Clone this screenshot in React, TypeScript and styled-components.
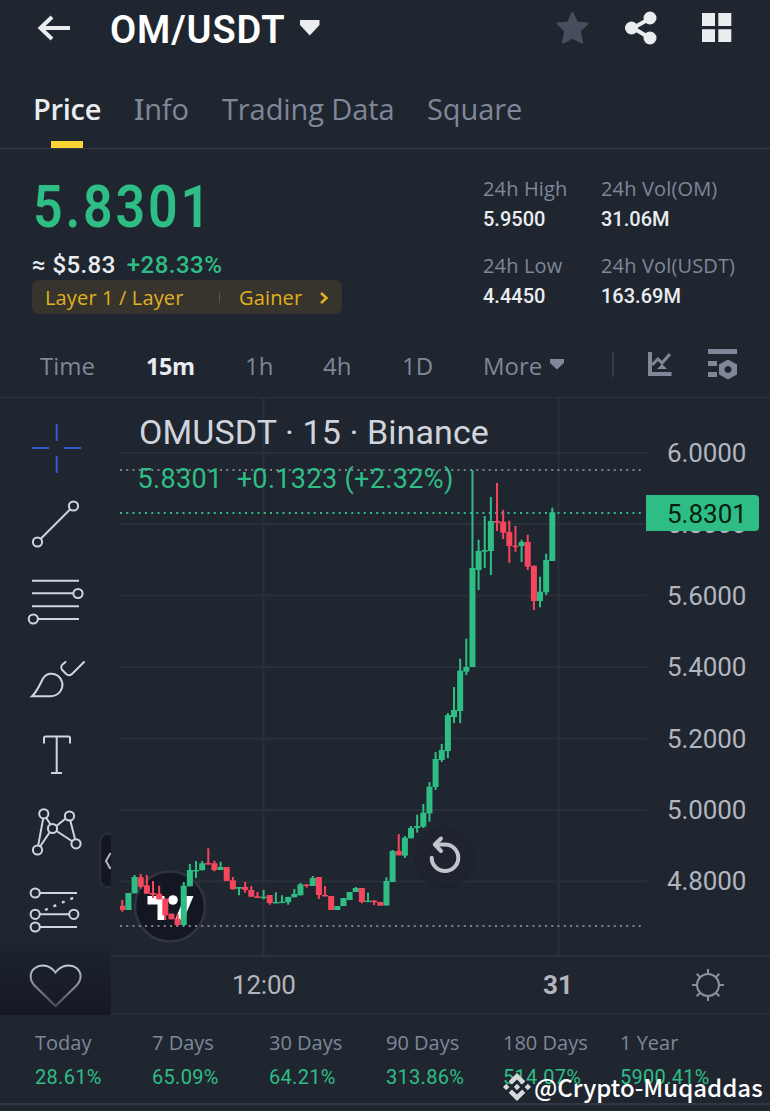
import React from 'react';
import styled, { createGlobalStyle } from 'styled-components';

const c = {
  bg: '#1f2630',
  line: '#2c343f',
  text: '#eaecef',
  muted: '#7f8799',
  green: '#2ebd85',
  red: '#f6465d',
  icon: '#d1d4dc',
  axis: '#b2b5be',
};
const label = "'Open Sans', 'Noto Sans', sans-serif";
const numeric = "Roboto, 'Liberation Sans', sans-serif";

const GlobalStyle = createGlobalStyle`
  * { box-sizing: border-box; }
  body { margin: 0; background: ${c.bg}; }
  svg { display: block; }
`;

const Screen = styled.main`
  width: 770px;
  height: 1111px;
  display: flex;
  flex-direction: column;
  overflow: hidden;
  position: relative;
  background: ${c.bg};
  color: ${c.text};
  font-family: ${label};
  white-space: nowrap;
`;

const Text = styled.span<{
  $size: number;
  $ls?: number;
  $color?: string;
  $weight?: number;
  $numeric?: boolean;
  $lh?: number;
}>`
  font-family: ${(p) => (p.$numeric ? numeric : label)};
  font-size: ${(p) => p.$size}px;
  letter-spacing: ${(p) => p.$ls ?? 0}px;
  color: ${(p) => p.$color ?? c.text};
  font-weight: ${(p) => p.$weight ?? 400};
  line-height: ${(p) => (p.$lh ? `${p.$lh}px` : 1.2)};
`;

const Header = styled.header`
  height: 60px;
  flex: none;
  display: grid;
  grid-template-columns: 73px 190px 256px 69px 77px 32px;
  padding: 0 0 4px 37px;
  align-items: center;
`;

const Title = styled.h1`
  margin: 0;
  padding-top: 3px;
  font: 600 38px/46px ${numeric};
  letter-spacing: 0.9px;
  color: #fff;
`;

const Tabs = styled.nav`
  height: 89px;
  flex: none;
  display: grid;
  grid-template-columns: 101px 88px 205px 110px;
  padding-left: 33px;
  border-bottom: 1px solid #353d48;
`;

const Tab = styled.div<{ $active?: boolean }>`
  padding-top: 29px;
  background: ${(p) =>
    p.$active ? 'linear-gradient(#fcd535, #fcd535) 17.5px 81px / 32px 7px no-repeat' : 'none'};
`;

const Serifed = styled.span`
  font-family: 'Noto Sans', sans-serif;
`;

const Summary = styled.section`
  height: 186px;
  flex: none;
  display: grid;
  grid-template-columns: 451px 118px 150px;
  padding-left: 32px;
`;

const PriceBlock = styled.div`
  display: flex;
  flex-direction: column;
  padding-top: 24px;
`;

const PriceLine = styled.div`
  height: 69px;
  padding-left: 1px;
`;

const LastPrice = styled.div`
  display: inline-block;
  font: 600 59px/68px ${numeric};
  letter-spacing: 3.2px;
  color: ${c.green};
  transform: scaleX(0.88);
  transform-origin: left;
`;

const ChangeLine = styled.div`
  height: 38px;
  display: flex;
  align-items: center;
  gap: 11px;
  padding-top: 8px;
`;

const Tags = styled.div`
  width: 310px;
  height: 34px;
  display: grid;
  grid-template-columns: 174px 20px 80px 12px;
  align-items: center;
  padding: 2px 0 0 13px;
  border-radius: 7px;
  background: #36342c;
`;

const TagDivider = styled.i`
  width: 1px;
  height: 10px;
  background: #6b5a25;
`;

const StatColumn = styled.div`
  display: flex;
  flex-direction: column;
  gap: 17px;
  padding-top: 25px;
`;

const Stat = styled.div`
  display: flex;
  flex-direction: column;
`;

const Intervals = styled.nav`
  height: 63px;
  flex: none;
  display: grid;
  grid-template-columns: 106px 99px 78px 79px 81px 67px 62px 36px 60px 32px;
  padding-left: 40px;
  align-items: center;
  border-bottom: 1px solid ${c.line};

  svg { margin-top: -4px; }
`;

const VRule = styled.i`
  width: 2px;
  height: 25px;
  background: #353c49;
  margin-top: -4px;
`;

const ChartArea = styled.section`
  height: 617px;
  flex: none;
  display: grid;
  grid-template-columns: 111px 536px 123px;
  grid-template-rows: 557px 60px;
  border-bottom: 2px solid #272e39;
`;

const Tools = styled.aside`
  grid-row: 1 / 3;
  background: linear-gradient(transparent 535px, #141823 620px);
  position: relative;
`;

const CollapseHandle = styled.button`
  position: absolute;
  right: 0;
  top: 435px;
  width: 12px;
  height: 55px;
  padding: 0;
  border: 2px solid #292e39;
  border-right: 0;
  border-radius: 9px 0 0 9px;
  background: #131722;
`;

const Plot = styled.div`
  position: relative;
`;

const Legend = styled.div`
  position: absolute;
  left: 28px;
  top: 12px;
  display: flex;
  flex-direction: column;
`;

const LegendValues = styled.div`
  margin-left: -1.5px;
  padding-top: 1px;
`;

const PriceAxis = styled.div`
  position: relative;
  display: flex;
  flex-direction: column;
  padding: 37px 0 0 20px;
`;

const AxisLabel = styled.span`
  font: 400 26px/36px ${numeric};
  letter-spacing: -0.1px;
  height: 71.4px;
  flex: none;
  color: ${c.axis};
`;

const PriceTag = styled.div`
  position: absolute;
  left: -1px;
  top: 97px;
  width: 113px;
  height: 36px;
  padding-left: 21px;
  border-radius: 0 4px 4px 0;
  background: #2ebd85;
  color: #08200f;
  font: 400 26px/38px ${numeric};
`;

const TimeAxis = styled.div`
  grid-column: 2 / 4;
  display: grid;
  grid-template-columns: 311px 148px 32px;
  padding: 0 0 1px 121px;
  align-items: center;
  border-top: 2px solid #2a313c;

  svg { margin-top: -1px; }
`;

const Performance = styled.footer`
  height: 90px;
  flex: none;
  display: grid;
  grid-template-columns: repeat(5, 117px) 1fr;
  padding: 14px 0 0 35px;
  border-bottom: 2px solid #303843;
`;

const Period = styled.div`
  display: flex;
  flex-direction: column;
`;

const Watermark = styled.div`
  position: absolute;
  left: 503px;
  top: 1070px;
  display: flex;
  align-items: center;
  gap: 3px;
  font: 500 24px/34px 'Noto Sans CJK SC', 'Noto Sans', sans-serif;
  color: #fff;
`;

// Each candle: direction, high, body top, body bottom, low (plot pixels from the screen top).
type Candle = ['u' | 'd', number, number, number, number];
const candles: Candle[] = [
  ['d', 900, 905.7, 910, 911.7], ['u', 893, 893, 910, 910], ['u', 875, 877, 893.3, 893.3],
  ['d', 874, 877.3, 886.7, 888.7], ['d', 875, 885.3, 893.7, 893.7], ['d', 881, 893, 894.7, 898],
  ['d', 885.7, 893.7, 899.3, 899.3], ['d', 898.7, 898.7, 915.3, 920], ['d', 913.7, 913.7, 919.3, 919.3],
  ['d', 914, 918.7, 925, 926], ['u', 882, 885.7, 925, 926], ['u', 864, 870, 886.3, 886.3],
  ['u', 861, 870, 871.3, 878], ['u', 861, 863.3, 870.3, 870.3], ['d', 848.3, 863, 864.5, 864.5],
  ['d', 860.7, 863.3, 870, 871.3], ['u', 861.7, 867, 870, 870], ['d', 867, 867, 881, 881],
  ['d', 877, 880.3, 889.3, 889.3], ['u', 887, 887, 888.7, 895.3], ['d', 882, 887, 890, 892.7],
  ['d', 886, 890, 896.7, 896.7], ['d', 892, 896.3, 898, 898], ['u', 890, 896.7, 898, 899.3],
  ['d', 895, 895, 903, 904.7], ['u', 892.3, 902, 903.3, 903.3], ['u', 895.3, 901.7, 903, 903],
  ['u', 896.7, 897, 902.3, 904.7], ['u', 889, 894, 897.3, 897.3], ['u', 883, 884.3, 895.3, 895.3],
  ['d', 884, 884.5, 886, 887.7], ['u', 876, 878, 886, 886], ['d', 877, 877, 895, 899],
  ['d', 886, 895, 896.3, 896.3], ['d', 896, 896, 910, 910], ['u', 906, 906, 910, 910],
  ['u', 898, 898, 906, 906], ['u', 892, 892, 900, 900], ['u', 887, 888, 892, 892],
  ['d', 888, 888, 902, 903.3], ['u', 892.7, 900.7, 902, 902], ['d', 900, 900.7, 902.3, 905],
  ['d', 902, 902, 905.7, 905.7], ['u', 877.3, 881, 905.5, 905.5], ['u', 850, 851, 882, 882],
  ['d', 834, 851, 855.3, 855.3], ['u', 836, 837.7, 855.7, 858], ['u', 826, 828, 838.3, 838.3],
  ['u', 814.7, 826, 828, 832.7], ['u', 804, 812.7, 826.7, 828], ['u', 782, 786.7, 813.3, 821.7],
  ['u', 752, 759, 787, 790], ['u', 744, 750, 760, 762], ['u', 713, 715, 751, 758],
  ['u', 687, 710, 717, 723], ['u', 658.7, 670.7, 711, 723], ['u', 638.7, 667, 671.7, 675],
  ['u', 470, 568, 667, 667], ['u', 539.7, 551, 570, 590], ['u', 516, 550, 551.7, 568],
  ['u', 497, 521, 551, 575], ['d', 483, 521, 522.7, 531], ['d', 510, 521.7, 532.7, 539],
  ['d', 520.7, 532, 546, 562.7], ['d', 526, 545.7, 546.9, 551.7], ['u', 539.7, 542, 546, 562],
  ['d', 534.7, 542, 566.7, 570], ['d', 565.7, 565.7, 601, 610], ['u', 576.7, 591.7, 601, 607.3],
  ['u', 553.7, 560, 592.3, 595], ['u', 507.7, 512.3, 561, 561],
];

const gridRows = [453, 524, 595.5, 667, 738.5, 810, 881.5];
const gridColumns = [263.5, 558.5];

function Chart() {
  return (
    <svg width="536" height="557" viewBox="111 398 536 557">
      <g stroke="#2a303a" strokeWidth="2">
        {gridRows.map((y) => <line key={y} x1="120" x2="647" y1={y} y2={y} />)}
        {gridColumns.map((x) => <line key={x} x1={x} x2={x} y1="398" y2="955" />)}
      </g>
      <g>
        <circle cx="170" cy="906.5" r="35" fill="#131722" stroke="#30343e" strokeWidth="2.5" />
        <path d="M147.5 896h17v24h-7v-15.5h-10z" fill="#fff" />
        <circle cx="173" cy="900" r="4.8" fill="#fff" />
        <path d="M185 896h8.5l-10 24h-8.5z" fill="#fff" />
      </g>
      <g strokeWidth="2" strokeDasharray="2 4.25">
        <line x1="120" x2="643" y1="470" y2="470" stroke="#7d818b" />
        <line x1="120" x2="643" y1="513" y2="513" stroke={c.green} />
        <line x1="120" x2="643" y1="926" y2="926" stroke="#7d818b" />
      </g>
      {candles.map(([dir, high, top, bottom, low], i) => {
        const x = 122.3 + i * 6.143;
        const left = Math.max(x - 3, 120);
        return (
          <g key={i} fill={dir === 'u' ? c.green : c.red}>
            <rect x={x - 1} y={high} width="2" height={low - high} />
            <rect x={left} y={top} width={x + 3 - left} height={Math.max(bottom - top, 1.4)} />
          </g>
        );
      })}
      <circle cx="444.5" cy="859" r="30" fill="#1a1f29" opacity=".55" />
      <circle cx="444.5" cy="856" r="29.5" fill="#1f232e" />
      <g fill="none" stroke="#c1c4cd" strokeWidth="4" strokeLinecap="round" strokeLinejoin="round">
        <path d="M431.7 857.8A13.3 13.3 0 1 0 445 844.5H436" />
        <path d="M441 838.5l-6.2 6 6.2 6.5" />
      </g>
    </svg>
  );
}

function DrawingTools() {
  return (
    <svg width="111" height="615" viewBox="0 398 111 615" fill="none" stroke={c.icon} strokeWidth="2">
      <defs>
        <linearGradient id="heartFade" x1="0" y1="0" x2="0" y2="1">
          <stop offset="0" stopColor="#c8cbd3" />
          <stop offset="1" stopColor="#4a4e59" />
        </linearGradient>
      </defs>
      <path d="M56.7 424v17M56.7 456v17M32 448h17M64 448h17" stroke="#2f5bd0" />
      <path d="M40.5 539l30-30" />
      <circle cx="37.5" cy="542" r="4.6" />
      <circle cx="73.5" cy="506" r="4.6" />
      <path d="M32 580.7h47M32 593.3h41.5M32 606.3h47M38 619h41" />
      <circle cx="78" cy="593.5" r="4.6" />
      <circle cx="33.3" cy="619" r="4.6" />
      <path d="M32 696.3C37.500 691 40 684 43 678.500C46.500 673 53 672.500 57.500 675.500C63 679.500 63.800 686 60.500 691C58 694.500 54.500 696.300 50.500 696.300z" />
      <path d="M65.500 662L62.500 664.500C60.800 666 61 668.500 62.300 670L66 673.800C68 676 70.500 675.500 72.500 673.500L84 662" strokeLinecap="round" />
      <path d="M44 743.500v-5.500q0-1.500 1.500-1.500h23q1.500 0 1.500 1.500v5.500M56.700 737v36M51 773h11" />
      <path d="M43.200 818.400l-5 27M46 817.500l4.400 6.800M56.400 826l9-7.200M70.200 820.300l4.800 18.700M56.500 831l15.300 10M49.500 832.500l-9.200 13.800" />
      <circle cx="43.800" cy="813.800" r="4.600" />
      <circle cx="69.500" cy="816" r="4.600" />
      <circle cx="52.500" cy="828.500" r="4.600" />
      <circle cx="37.500" cy="850" r="4.600" />
      <circle cx="76" cy="843.800" r="4.600" />
      <path d="M40 893h37M40 914.300h29M40 927h37" />
      <path d="M45 910l30-13" strokeWidth="2.400" strokeDasharray="3 6.200" />
      <circle cx="35.200" cy="893" r="4.600" />
      <circle cx="35.200" cy="914.300" r="4.600" />
      <circle cx="73.800" cy="914.300" r="4.600" />
      <circle cx="35.200" cy="927" r="4.600" />
      <path
        d="M55.500 1006L35 986C29 980 29.500 972 35 968C41 963.500 50 965 55.500 972.500C61 965 70.500 963.500 76.500 968C82 972.500 82 980 76 986z"
        stroke="url(#heartFade)"
      />
    </svg>
  );
}

const periods = [
  { name: 'Today', value: '28.61%' },
  { name: '7 Days', value: '65.09%' },
  { name: '30 Days', value: '64.21%' },
  { name: '90 Days', value: '313.86%' },
  { name: '180 Days', value: '514.07%' },
  { name: '1 Year', value: '5900.41%' },
];

const stats = [
  [
    { name: '24h High', value: '5.9500' },
    { name: '24h Low', value: '4.4450' },
  ],
  [
    { name: '24h Vol(OM)', value: '31.06M' },
    { name: '24h Vol(USDT)', value: '163.69M' },
  ],
];

const tabs = ['Price', 'Info', 'Trading Data', 'Square'];
const intervals = ['Time', '15m', '1h', '4h', '1D', 'More'];
const ticks = ['6.0000', '5.8000', '5.6000', '5.4000', '5.2000', '5.0000', '4.8000'];

export default function App() {
  return (
    <>
      <GlobalStyle />
      <Screen>
        <Header>
          <svg width="34" height="26" viewBox="0 0 34 26" fill="none" stroke="#eaecef" strokeWidth="4">
            <path d="M33 13H4M15 2L3.500 13L15 24" />
          </svg>
          <Title>OM/USDT</Title>
          <svg width="20" height="16" viewBox="0 0 20 16" fill="#eaecef">
            <path d="M0 0h19.500v5L9.800 15.500L0 5z" />
          </svg>
          <svg width="34" height="34" viewBox="0 0 34 34" fill="#474f5e" stroke="#474f5e" strokeWidth="2" strokeLinejoin="round">
            <path d="M16.500 2l4.300 9.500 10.700 1-7.800 7.500 2.300 11.500-9.500-5-9.500 5 2.300-11.500L1.500 12.500l10.700-1z" />
          </svg>
          <svg width="32" height="34" viewBox="0 0 32 34" fill="#eaecef">
            <path d="M25 7.500L8 17l17 10" fill="none" stroke="#eaecef" strokeWidth="4" />
            <circle cx="6.500" cy="17" r="6.500" />
            <circle cx="25" cy="7" r="6.500" />
            <circle cx="25" cy="27" r="6.500" />
          </svg>
          <svg width="30" height="30" viewBox="0 0 30 30" fill="#eaecef">
            <path d="M0 0h13v13H0zM16.300 0h13v13h-13zM0 16.200h13v12.800H0zM16.300 16.200h13v12.800h-13z" />
          </svg>
        </Header>

        <Tabs>
          {tabs.map((t, i) => (
            <Tab key={t} $active={i === 0}>
              <Text $size={29} $lh={40} $weight={i === 0 ? 600 : 500} $ls={i === 0 ? -0.3 : -0.1} $color={i === 0 ? c.text : c.muted}>
                {t === 'Info' ? <><Serifed>I</Serifed>nfo</> : t}
              </Text>
            </Tab>
          ))}
        </Tabs>

        <Summary>
          <PriceBlock>
            <PriceLine>
              <LastPrice>5.8301</LastPrice>
            </PriceLine>
            <ChangeLine>
              <Text $numeric $size={24} $weight={500} $ls={0.4}>≈ $5.83</Text>
              <Text $numeric $size={24} $weight={500} $ls={0.5} $color={c.green}>+28.33%</Text>
            </ChangeLine>
            <Tags>
              <Text $size={20} $ls={0.15} $color="#e0b020">Layer 1 / Layer</Text>
              <TagDivider />
              <Text $size={20} $ls={0.15} $color="#e0b020">Gainer</Text>
              <svg width="10" height="12" viewBox="0 0 10 12" fill="none" stroke="#e0b020" strokeWidth="2.600">
                <path d="M2 1l5.500 5L2 11" />
              </svg>
            </Tags>
          </PriceBlock>
          {stats.map((column) => (
            <StatColumn key={column[0].name}>
              {column.map((s) => (
                <Stat key={s.name}>
                  <Text $size={20} $lh={30} $ls={0.15} $color={c.muted}>{s.name}</Text>
                  <Text $numeric $size={20} $lh={30} $weight={500}>{s.value}</Text>
                </Stat>
              ))}
            </StatColumn>
          ))}
        </Summary>

        <Intervals>
          {intervals.map((t) => (
            <Text key={t} $size={t === '15m' ? 23.5 : 24} $ls={t === '15m' ? -0.4 : 0} $weight={t === '15m' ? 700 : 400} $color={t === '15m' ? c.text : c.muted}>{t}</Text>
          ))}
          <svg width="14" height="11" viewBox="0 0 14 11" fill={c.muted}><path d="M0 0h14v4L7 10.500L0 4z" /></svg>
          <VRule />
          <svg width="24" height="24" viewBox="0 0 24 24" fill="none" stroke={c.muted} strokeWidth="4">
            <path d="M2 0v22h21.500" />
            <path d="M4 13l6-6 4 4 8-9" strokeWidth="3" />
            <path d="M9 17l5-5 5 5z" fill={c.muted} stroke="none" />
          </svg>
          <svg width="30" height="31" viewBox="0 0 30 31" fill={c.muted}>
            <path d="M0 0h29v5H0zM0 12h9v5H0zM0 23h9v5H0z" />
            <path fillRule="evenodd" d="M20 10.500l9 5v10l-9 5-9-5v-10zM20 17a3.500 3.500 0 1 0 .01 0z" />
          </svg>
        </Intervals>

        <ChartArea>
          <Tools>
            <DrawingTools />
            <CollapseHandle>
              <svg width="10" height="50" viewBox="0 0 10 50" fill="none" stroke="#b2b5be" strokeWidth="2">
                <path d="M9.500 17l-4.500 8 4.500 8" />
              </svg>
            </CollapseHandle>
          </Tools>
          <Plot>
            <Chart />
            <Legend>
              <Text $numeric $size={34} $lh={44} $ls={0.1} $color="#d1d4dc">OMUSDT · 15 · Binance</Text>
              <LegendValues>
                <Text $numeric $size={27} $lh={48} $ls={0.35} $color={c.green}>5.8301&nbsp; +0.1323 (+2.32%)</Text>
              </LegendValues>
            </Legend>
          </Plot>
          <PriceAxis>
            {ticks.map((t) => <AxisLabel key={t}>{t}</AxisLabel>)}
            <PriceTag>5.8301</PriceTag>
          </PriceAxis>
          <TimeAxis>
            <Text $numeric $size={26} $ls={-0.2} $color={c.axis}>12:00</Text>
            <Text $numeric $size={26} $weight={700} $color={c.axis}>31</Text>
            <svg width="34" height="34" viewBox="0 0 34 34" fill="none" stroke="#8c909a" strokeWidth="2">
              <circle cx="17" cy="17" r="11" />
              <path d="M17 1v5M17 28v5M1 17h5M28 17h5M5.700 5.700l3.500 3.500M24.800 24.800l3.500 3.500M5.700 28.300l3.500-3.500M24.800 9.200l3.500-3.500" />
            </svg>
          </TimeAxis>
        </ChartArea>

        <Performance>
          {periods.map((p) => (
            <Period key={p.name}>
              <Text $size={20} $lh={28} $color={c.muted}>{p.name}</Text>
              <Text $numeric $size={20} $lh={40} $ls={0.3} $color={c.green}>{p.value}</Text>
            </Period>
          ))}
        </Performance>

        <Watermark>
          <svg width="28" height="28" viewBox="0 0 28 28" fill="#d8d9db">
            <path d="M14 0l8.300 8.300-3.200 3.200L14 6.400l-5.100 5.100-3.200-3.200zM14 28l8.300-8.300-3.200-3.200L14 21.600l-5.100-5.100-3.200 3.200zM3.200 10.800L6.400 14l-3.200 3.200L0 14zM24.800 10.800L28 14l-3.200 3.200-3.200-3.200zM14 10.800l3.200 3.200-3.200 3.200-3.200-3.200z" />
          </svg>
          <span>@Crypto-Muqaddas</span>
        </Watermark>
      </Screen>
    </>
  );
}
